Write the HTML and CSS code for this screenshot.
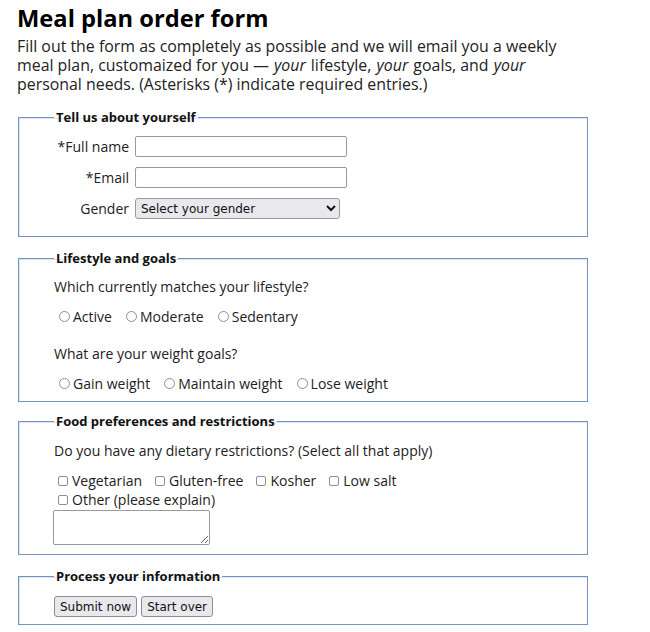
FILE: index.html
```html
<!DOCTYPE html>
<html lang="en">
<head>
<meta charset="utf-8">
<title>Meal plan order form</title>
<link rel="stylesheet" href="styles.css">
</head>
<body>
<main class="page">
  <h1 class="title">Meal plan order form</h1>
  <p class="intro">Fill out the form as completely as possible and we will email you a weekly meal plan, customaized for you — <em class="em">your</em> lifestyle, <em class="em">your</em> goals, and <em class="em">your</em> personal needs. (Asterisks (*) indicate required entries.)</p>
  <form class="form">
    <fieldset class="box">
      <legend class="legend">Tell us about yourself</legend>
      <div class="grid">
        <label class="field-label" for="name">*Full name</label>
        <input class="text" id="name" type="text">
        <label class="field-label" for="email">*Email</label>
        <input class="text" id="email" type="text">
        <label class="field-label" for="gender">Gender</label>
        <select class="select" id="gender"><option>Select your gender</option></select>
      </div>
    </fieldset>

    <fieldset class="box compact">
      <legend class="legend">Lifestyle and goals</legend>
      <p class="question">Which currently matches your lifestyle?</p>
      <div class="options">
        <label class="opt"><input class="radio" type="radio" name="ls">Active</label>
        <label class="opt"><input class="radio" type="radio" name="ls">Moderate</label>
        <label class="opt"><input class="radio" type="radio" name="ls">Sedentary</label>
      </div>
      <p class="question next">What are your weight goals?</p>
      <div class="options">
        <label class="opt"><input class="radio" type="radio" name="wg">Gain weight</label>
        <label class="opt"><input class="radio" type="radio" name="wg">Maintain weight</label>
        <label class="opt"><input class="radio" type="radio" name="wg">Lose weight</label>
      </div>
    </fieldset>

    <fieldset class="box compact food">
      <legend class="legend">Food preferences and restrictions</legend>
      <p class="question">Do you have any dietary restrictions? (Select all that apply)</p>
      <div class="options">
        <label class="opt"><input class="check" type="checkbox">Vegetarian</label>
        <label class="opt"><input class="check" type="checkbox">Gluten-free</label>
        <label class="opt"><input class="check" type="checkbox">Kosher</label>
        <label class="opt"><input class="check" type="checkbox">Low salt</label>
      </div>
      <div class="options tight">
        <label class="opt"><input class="check" type="checkbox">Other (please explain)</label>
      </div>
      <textarea class="area"></textarea>
    </fieldset>

    <fieldset class="box last">
      <legend class="legend">Process your information</legend>
      <div class="buttons">
        <button class="btn" type="button">Submit now</button>
        <button class="btn" type="button">Start over</button>
      </div>
    </fieldset>
  </form>
</main>
</body>
</html>
```
FILE: styles.css
```css
html, body {
  margin: 0;
  padding: 0;
  background: #ffffff;
}
body {
  font-family: "Open Sans", "Liberation Sans", sans-serif;
  color: #222222;
}
.page {
  padding: 3px 17px 0 17px;
}
.title {
  margin: 0;
  font-size: 23.7px;
  line-height: 30px;
  font-weight: 700;
  color: #000000;
}
.intro {
  margin: 4px 0 0 0;
  width: 548px;
  font-size: 15.9px;
  line-height: 19px;
}
.em {
  padding: 0 1px;
}
.form {
  margin-top: 14px;
}
.box {
  box-sizing: border-box;
  width: 570px;
  margin: 0 0 12px 1px;
  padding: 10px 20px 17px 35px;
  border: 1px solid #7393c2;
  box-shadow: inset 1px 1px 0 #dbe4f1;
}
.box.compact {
  padding-bottom: 8px;
}
.box.food {
  margin-top: -2px;
  padding-top: 11px;
  padding-bottom: 9px;
}
.legend {
  padding: 0 2px;
  font-size: 13px;
  line-height: 18px;
  font-weight: 700;
  color: #111111;
}
.grid {
  display: grid;
  grid-template-columns: 75px auto;
  column-gap: 6px;
  row-gap: 10px;
  justify-content: start;
  align-items: center;
}
.field-label {
  text-align: right;
  font-size: 14px;
  color: #222222;
}
.text {
  box-sizing: border-box;
  width: 212px;
  height: 21px;
  margin: 0;
  border: 1px solid #9a9a9a;
  border-radius: 2px;
  background: #ffffff;
}
.select {
  box-sizing: border-box;
  width: 205px;
  height: 21px;
  margin: 0;
  padding: 0 1px;
  border: 1px solid #9a9a9a;
  border-radius: 3px;
  background: #e9e9ed;
  font-family: "DejaVu Sans", sans-serif;
  font-size: 12px;
  color: #111111;
}
.question {
  margin: 0;
  font-size: 14px;
  line-height: 19px;
}
.question.next {
  margin-top: 18px;
}
.options {
  display: flex;
  margin-top: 11px;
  font-size: 14px;
  line-height: 19px;
}
.options.tight {
  margin-top: 0;
}
.opt {
  display: inline-flex;
  align-items: center;
  margin-right: 9px;
}
.radio {
  appearance: none;
  -webkit-appearance: none;
  box-sizing: border-box;
  width: 11px;
  height: 11px;
  margin: 0 3px 0 5px;
  border: 1px solid #8f8f8f;
  border-radius: 50%;
  background: #ffffff;
}
.check {
  appearance: none;
  -webkit-appearance: none;
  box-sizing: border-box;
  width: 10px;
  height: 10px;
  margin: 0 4px 0 4px;
  border: 1px solid #8f8f8f;
  border-radius: 2px;
  background: #ffffff;
}
.area {
  display: block;
  box-sizing: border-box;
  width: 157px;
  height: 35px;
  margin: 1px 0 0 -1px;
  border: 1px solid #9a9a9a;
  border-radius: 2px;
}
.box.last {
  padding-top: 11px;
  padding-bottom: 7px;
}
.buttons {
  display: flex;
  gap: 4px;
}
.btn {
  box-sizing: border-box;
  height: 21px;
  margin: 0;
  padding: 0 5px;
  border: 1px solid #8f8f8f;
  border-radius: 3px;
  background: #e9e9ed;
  font-family: "DejaVu Sans", sans-serif;
  font-size: 12px;
  color: #111111;
}
```
